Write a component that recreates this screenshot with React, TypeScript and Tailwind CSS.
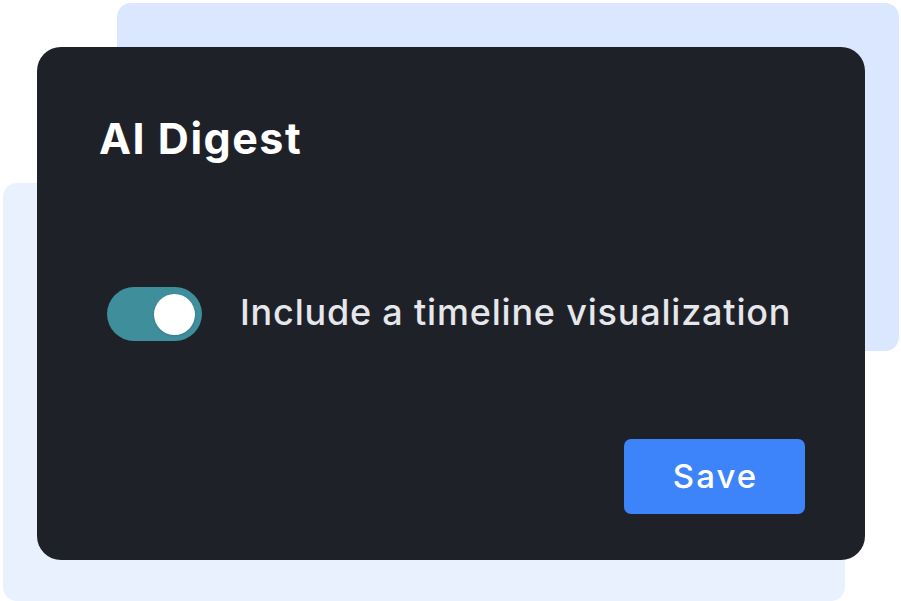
import { useState } from 'react'

export default function App() {
  const [enabled, setEnabled] = useState(true)

  return (
    <div className="relative h-[601px] w-[901px] overflow-hidden bg-white" style={{ fontFamily: 'Inter, "Open Sans", sans-serif' }}>
      {/* decorative panels behind the card */}
      <div className="absolute left-[117px] top-[3px] h-[348px] w-[782px] rounded-[14px] bg-[#dae7fe]" />
      <div className="absolute left-[3px] top-[183px] h-[418px] w-[842px] rounded-[14px] bg-[#eaf1fe]" />

      <div className="relative pl-[37px] pt-[47px]">
        <div className="flex h-[513px] w-[828px] flex-col rounded-[24px] bg-[#1f2129] pb-[46px] pl-[62px] pr-[60px] pt-[56px]">
          <h1 className="text-[43px] font-bold leading-[70px] tracking-[1.5px] text-white">AI Digest</h1>

          <div className="ml-2 mt-[112px] flex items-center gap-[38px]">
            <button
              onClick={() => setEnabled(!enabled)}
              className={`flex h-[54px] w-[95px] items-center rounded-full px-[7px] ${enabled ? 'justify-end bg-[#3e8e9b]' : 'justify-start bg-gray-600'}`}
            >
              <span className="h-[41px] w-[41px] rounded-full bg-white shadow-sm" />
            </button>
            <span className="mb-1 text-[36px] font-medium leading-[54px] tracking-[0.8px] text-[#e5e7eb]">
              Include a timeline visualization
            </span>
          </div>

          <div className="mt-auto flex justify-end">
            <button className="h-[75px] w-[181px] rounded-[7px] bg-[#3d84fb] pl-[2px] text-[33px] font-medium tracking-[2px] text-white">
              Save
            </button>
          </div>
        </div>
      </div>
    </div>
  )
}
